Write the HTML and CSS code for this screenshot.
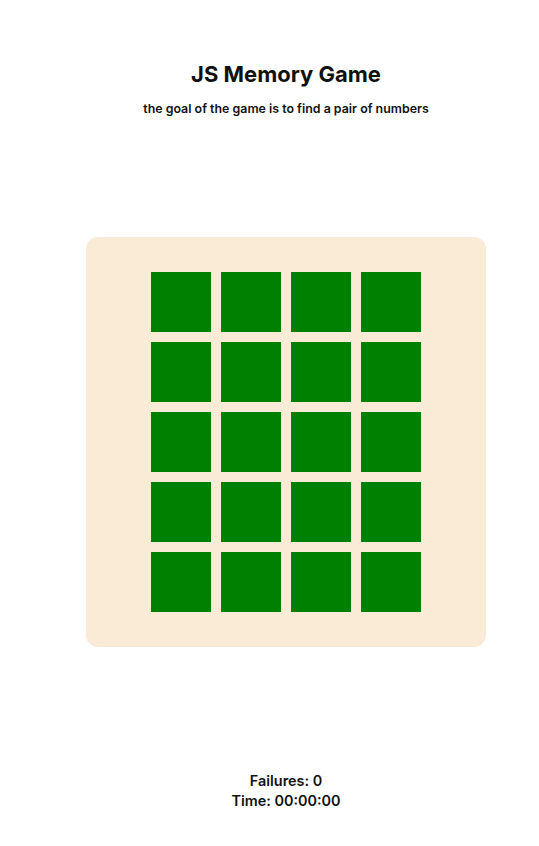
FILE: index.html
```html
<!DOCTYPE html>
<html>
<head>
<meta charset="utf-8">
<link rel="stylesheet" href="styles.css">
</head>
<body>
<header class="header">
  <h1 class="title">JS Memory Game</h1>
  <p class="subtitle">the goal of the game is to find a pair of numbers</p>
</header>
<main class="board">
  <div class="grid">
    <div class="card"></div><div class="card"></div><div class="card"></div><div class="card"></div>
    <div class="card"></div><div class="card"></div><div class="card"></div><div class="card"></div>
    <div class="card"></div><div class="card"></div><div class="card"></div><div class="card"></div>
    <div class="card"></div><div class="card"></div><div class="card"></div><div class="card"></div>
    <div class="card"></div><div class="card"></div><div class="card"></div><div class="card"></div>
  </div>
</main>
<footer class="stats">
  <div class="stat">Failures: 0</div>
  <div class="stat">Time: 00:00:00</div>
</footer>
</body>
</html>
```
FILE: styles.css
```css
html, body {
  margin: 0;
  padding: 0;
  background: #ffffff;
  color: #111111;
  font-family: "Inter", "Open Sans", "Liberation Sans", sans-serif;
}
body {
  padding-left: 33px;
}
.header {
  text-align: center;
  padding-top: 60px;
}
.title {
  margin: 0;
  font-size: 22px;
  line-height: 28px;
  font-weight: 700;
}
.subtitle {
  margin: 12px 0 0;
  font-size: 12.4px;
  line-height: 18px;
  font-weight: 600;
}
.board {
  width: 400px;
  height: 410px;
  margin: 119px auto 0;
  background: #faebd7;
  border-radius: 12px;
  box-sizing: border-box;
  padding-top: 35px;
  display: flex;
  justify-content: center;
  align-items: flex-start;
}
.grid {
  display: grid;
  grid-template-columns: repeat(4, 60px);
  grid-auto-rows: 60px;
  gap: 10px;
}
.card {
  background: #008000;
}
.stats {
  margin-top: 124px;
  text-align: center;
  font-size: 14.4px;
  line-height: 20px;
  font-weight: 600;
}
```
